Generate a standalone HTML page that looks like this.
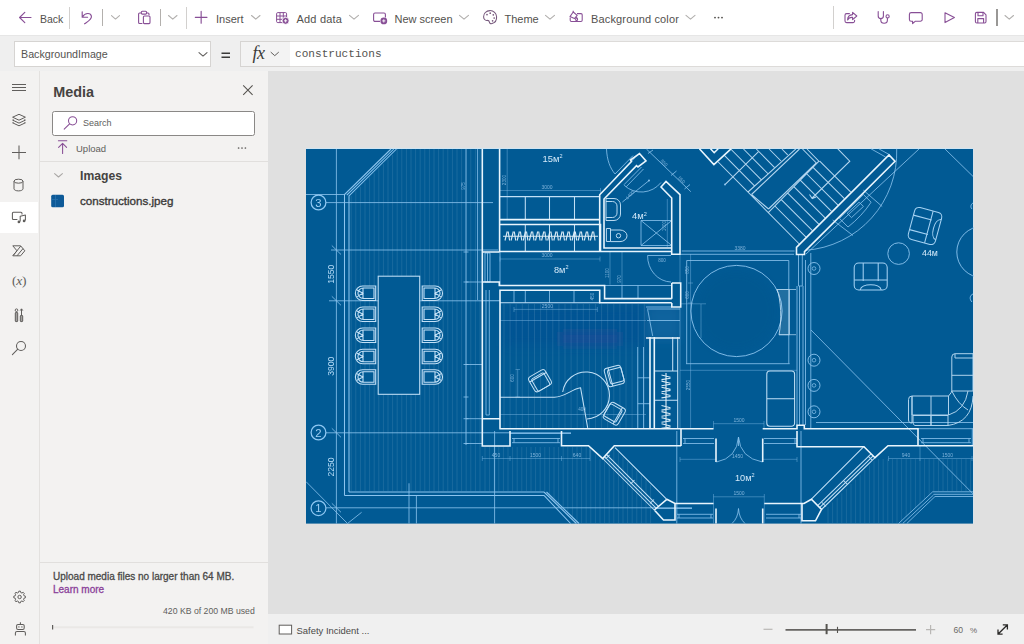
<!DOCTYPE html><html lang="en"><head><meta charset="utf-8"><title>Power Apps Studio</title><style>
*{box-sizing:border-box;margin:0;padding:0}
html,body{width:1024px;height:644px;overflow:hidden;background:#e0e0e0;font-family:"Liberation Sans",sans-serif;color:#3b3a39}
.abs{position:absolute}
#top{left:0;top:0;width:1024px;height:35px;background:#fff}
#fbar{left:0;top:35px;width:1024px;height:36px;background:#efefef;border-top:1px solid #e6e6e6}
#rail{left:0;top:71px;width:40px;height:573px;background:#f3f2f1;border-right:1px solid #e3e1df}
#panel{left:40px;top:71px;width:228px;height:573px;background:#f3f2f1}
#canvas{left:268px;top:71px;width:756px;height:543px;background:#e0e0e0}
#bbar{left:268px;top:614px;width:756px;height:30px;background:#f0f0f0}
.t{position:absolute;white-space:nowrap;line-height:1;color:#53514e}

svg{position:absolute;overflow:visible}
.sep{position:absolute;width:1px}
</style></head><body><div id="top" class="abs"></div><div id="fbar" class="abs"></div><div id="rail" class="abs"></div><div id="panel" class="abs"></div><div id="canvas" class="abs"></div><div id="bbar" class="abs"></div><svg class="abs" style="left:0;top:0" width="1024" height="644" viewBox="0 0 1024 644"><path d="M69.5 7V29M186.5 7V29M833.5 6V29" stroke="#d2d0ce" stroke-width="1"/><path d="M102.5 9V26M160.5 9V26" stroke="#b3b0ad" stroke-width="1"/><path d="M997 9V26" stroke="#55534f" stroke-width="1.2"/><path d="M31 17.5H19.7M24.8 12.3L19.6 17.5L24.8 22.7" fill="none" stroke="#884f96" stroke-width="1.15" stroke-linecap="round" stroke-linejoin="round"/><path d="M82.2 11.8V17.2H87.6M82.6 16.8C85.2 12.6 90.6 12.4 91.4 16.2C92 19.4 88.2 21.4 84.6 23.8" fill="none" stroke="#884f96" stroke-width="1.15" stroke-linecap="round" stroke-linejoin="round"/><path d="M111.5 15.560000000000002 L115.5 19.04 L119.5 15.560000000000002" fill="none" stroke="#b1afad" stroke-width="1.1" stroke-linecap="round" stroke-linejoin="round"/><g fill="none" stroke="#884f96" stroke-width="1.1" stroke-linejoin="round"><path d="M141.3 13H139.6a1 1 0 0 0-1 1V22.5a1 1 0 0 0 1 1H142.4"/><path d="M146.6 13h1.4a1 1 0 0 1 1 1v1.2"/><rect x="141.3" y="11.3" width="5.3" height="2.8" rx="1"/><rect x="143.4" y="16" width="6.6" height="7.6" rx="1"/></g><path d="M168.5 15.482500000000002 L172.75 19.1175 L177 15.482500000000002" fill="none" stroke="#b1afad" stroke-width="1.1" stroke-linecap="round" stroke-linejoin="round"/><path d="M195.3 17.3H207M201.15 11.4V23.2" stroke="#884f96" stroke-width="1.15" stroke-linecap="round"/><path d="M251.5 15.482500000000002 L255.75 19.1175 L260 15.482500000000002" fill="none" stroke="#b1afad" stroke-width="1.1" stroke-linecap="round" stroke-linejoin="round"/><g fill="none" stroke="#884f96" stroke-width="1"><rect x="276.6" y="12.6" width="10" height="10" rx="1.2"/><path d="M280 12.6V22.6M283.3 12.6V22.6M276.6 16V16H286.6M276.6 19.3H286.6"/></g><circle cx="285.6" cy="20.8" r="3.5" fill="#884f96" stroke="#fff" stroke-width="0.8"/><path d="M284 20.8H287.2M285.6 19.2V22.4" stroke="#fff" stroke-width="0.9"/><path d="M349.5 15.405000000000001 L354.0 19.195 L358.5 15.405000000000001" fill="none" stroke="#b1afad" stroke-width="1.1" stroke-linecap="round" stroke-linejoin="round"/><path d="M380 21.4H375a1.4 1.4 0 0 1-1.4-1.4V14.4a1.4 1.4 0 0 1 1.4-1.4H384a1.4 1.4 0 0 1 1.4 1.4V17.5" fill="none" stroke="#884f96" stroke-width="1.1"/><circle cx="383.8" cy="20.9" r="3.4" fill="#884f96"/><path d="M382.2 20.9H385.4M383.8 19.3V22.5" stroke="#fff" stroke-width="0.9"/><path d="M459.5 15.405000000000001 L464.0 19.195 L468.5 15.405000000000001" fill="none" stroke="#b1afad" stroke-width="1.1" stroke-linecap="round" stroke-linejoin="round"/><path d="M490 10.6C486 10.6 483.6 13.6 483.6 16.8C483.6 19 485 20.6 487 20.4C488.6 20.2 489.2 21 489.4 22.2C489.6 23.4 490.6 24 492 23.6C495 22.8 496.8 20 496.6 16.8C496.4 13.2 493.6 10.6 490 10.6Z" fill="none" stroke="#76587c" stroke-width="1.05"/><g fill="#76587c"><circle cx="487" cy="14.6" r="0.85"/><circle cx="490.2" cy="13.2" r="0.85"/><circle cx="493.3" cy="14.8" r="0.85"/><circle cx="494.2" cy="18" r="0.85"/><circle cx="492.6" cy="20.8" r="0.85"/></g><path d="M545.5 15.405000000000001 L550.0 19.195 L554.5 15.405000000000001" fill="none" stroke="#b1afad" stroke-width="1.1" stroke-linecap="round" stroke-linejoin="round"/><g fill="none" stroke="#884f96" stroke-width="1.05" stroke-linejoin="round"><path d="M577 13.6H581a1.2 1.2 0 0 1 1.2 1.2V20.3a1.2 1.2 0 0 1-1.2 1.2H571.4a1.2 1.2 0 0 1-1.2-1.2V17.4"/><path d="M570 16.6L573.2 12L577.2 15.4L574.4 18.6Z"/><path d="M573.2 12V10.8"/><path d="M576.6 17.4c.5.9 1 1.4 1 2a1 1 0 0 1-2 0c0-.6.5-1.1 1-2Z"/></g><path d="M686 15.405000000000001 L690.5 19.195 L695 15.405000000000001" fill="none" stroke="#b1afad" stroke-width="1.1" stroke-linecap="round" stroke-linejoin="round"/><g fill="#55534f"><circle cx="715" cy="17.6" r="0.95"/><circle cx="718.5" cy="17.6" r="0.95"/><circle cx="722" cy="17.6" r="0.95"/></g><g fill="none" stroke="#884f96" stroke-width="1.1" stroke-linejoin="round" stroke-linecap="round"><path d="M849.4 13.6H846.6a1.6 1.6 0 0 0-1.6 1.6V21a1.6 1.6 0 0 0 1.6 1.6H853a1.6 1.6 0 0 0 1.6-1.6V20.2"/><path d="M852.6 12.4L856.8 16L852.6 19.6V17.4C850 17.2 848.4 18.2 847.6 20C847.6 16.8 849.4 14.8 852.6 14.6Z"/></g><g fill="none" stroke="#884f96" stroke-width="1.1" stroke-linecap="round"><path d="M878.2 11.6V16a2.6 2.6 0 0 0 5.2 0V11.6"/><path d="M880.8 18.6V20a3.3 3.3 0 0 0 6.6 0V18"/><circle cx="887.6" cy="16.4" r="1.6"/></g><path d="M911.2 12.6H920.4a1.8 1.8 0 0 1 1.8 1.8V19.4a1.8 1.8 0 0 1-1.8 1.8H915.4L912.6 23.6V21.2H911.2a1.8 1.8 0 0 1-1.8-1.8V14.4a1.8 1.8 0 0 1 1.8-1.8Z" fill="none" stroke="#884f96" stroke-width="1.1" stroke-linejoin="round"/><path d="M945 12.8L954.4 17.6L945 22.6Z" fill="none" stroke="#884f96" stroke-width="1.1" stroke-linejoin="round"/><g fill="none" stroke="#884f96" stroke-width="1.1" stroke-linejoin="round"><path d="M976.8 12.4H983.6L986 14.8V21.6a1.4 1.4 0 0 1-1.4 1.4H976.8a1.4 1.4 0 0 1-1.4-1.4V13.8a1.4 1.4 0 0 1 1.4-1.4Z"/><path d="M978 12.6V15.8H983V12.6M977.8 23V18.6H983.6V23"/></g><path d="M1005 15.482500000000002 L1009.25 19.1175 L1013.5 15.482500000000002" fill="none" stroke="#b1afad" stroke-width="1.1" stroke-linecap="round" stroke-linejoin="round"/><rect x="14.5" y="41.5" width="196" height="25" fill="#fff" stroke="#d6d4d2" stroke-width="1"/><path d="M199 52.559999999999995 L203.0 56.04 L207 52.559999999999995" fill="none" stroke="#605e5c" stroke-width="1.1" stroke-linecap="round" stroke-linejoin="round"/><path d="M221.5 53.2H230M221.5 57.2H230" stroke="#3b3a39" stroke-width="1.5"/><rect x="240.5" y="41.5" width="50" height="25" fill="#f3f3f3" stroke="#d6d4d2" stroke-width="1"/><rect x="290" y="41" width="734" height="26" fill="#fff"/><path d="M290 41.5H1024M290 66.5H1024" stroke="#dddbd9" stroke-width="1"/><path d="M271 52.3375 L274.75 55.6625 L278.5 52.3375" fill="none" stroke="#605e5c" stroke-width="1.0" stroke-linecap="round" stroke-linejoin="round"/><path d="M12 84.5H26M12 87.5H26M12 90.5H26" stroke="#605e5c" stroke-width="1"/><g fill="none" stroke="#605e5c" stroke-width="1" stroke-linejoin="round"><path d="M19 114.3L25.4 117.2L19 120.2L12.6 117.2Z"/><path d="M13.6 119.6L12.6 120.1L19 123.1L25.4 120.1L24.4 119.6"/><path d="M13.6 122.3L12.6 122.8L19 125.8L25.4 122.8L24.4 122.3"/></g><path d="M12 152.4H26M19 145.6V159.2" stroke="#605e5c" stroke-width="1.05"/><g fill="none" stroke="#605e5c" stroke-width="1"><ellipse cx="18.5" cy="181.2" rx="4.5" ry="2"/><path d="M14 181.2V188.8c0 1.2 2 2.1 4.5 2.1s4.5-.9 4.5-2.1V181.2"/></g><rect x="0" y="202" width="38" height="31" fill="#fff"/><g fill="none" stroke="#605e5c" stroke-width="1.05" stroke-linejoin="round"><path d="M17.4 219.4H13.4a1 1 0 0 1-1-1V213.2a1 1 0 0 1 1-1H21a1 1 0 0 1 1 1V214.6"/><path d="M20.2 221.6V216.2L25.4 215V220.6"/></g><circle cx="18.9" cy="221.9" r="1.35" fill="#605e5c"/><circle cx="24.1" cy="220.9" r="1.35" fill="#605e5c"/><g fill="none" stroke="#605e5c" stroke-width="1" stroke-linejoin="round"><path d="M12.8 245.8H20.6L24.8 250.8L20.6 255.8H12.8L17 250.8Z"/><path d="M20.8 246L13.2 255.4M23 248.6L17 255.8"/></g><g fill="#605e5c" fill-opacity=".55" stroke="#605e5c" stroke-width="1"><rect x="15.3" y="312.4" width="2.4" height="9.2" rx="0.6"/><rect x="20.3" y="315.4" width="2.4" height="6.2" rx="0.6"/><circle cx="16.5" cy="310.2" r="1.3" fill="none"/><path d="M21.5 309V315.4M20.2 310.6L21.5 308.8L22.8 310.6" fill="none"/></g><g fill="none" stroke="#605e5c" stroke-width="1.05" stroke-linecap="round"><circle cx="21" cy="346" r="4.5"/><path d="M17.8 349.2L12.4 354.6"/></g><path d="M18.84 591.15 L20.36 591.15 L20.79 592.56 L21.90 593.01 L23.20 592.32 L24.28 593.40 L23.59 594.70 L24.04 595.81 L25.45 596.24 L25.45 597.76 L24.04 598.19 L23.59 599.30 L24.28 600.60 L23.20 601.68 L21.90 600.99 L20.79 601.44 L20.36 602.85 L18.84 602.85 L18.41 601.44 L17.30 600.99 L16.00 601.68 L14.92 600.60 L15.61 599.30 L15.16 598.19 L13.75 597.76 L13.75 596.24 L15.16 595.81 L15.61 594.70 L14.92 593.40 L16.00 592.32 L17.30 593.01 L18.41 592.56Z" fill="none" stroke="#605e5c" stroke-width="1" stroke-linejoin="round"/><circle cx="19.6" cy="597" r="1.7" fill="none" stroke="#605e5c" stroke-width="1"/><g fill="none" stroke="#605e5c" stroke-width="1.05" stroke-linejoin="round"><path d="M20.4 622.2V624.4"/><rect x="16.6" y="624.4" width="7.6" height="5" rx="1.4"/><path d="M15.4 635.4V633a1.6 1.6 0 0 1 1.6-1.6H23.8a1.6 1.6 0 0 1 1.6 1.6V635.4"/></g><circle cx="18.9" cy="626.9" r="0.7" fill="#605e5c"/><circle cx="21.9" cy="626.9" r="0.7" fill="#605e5c"/><path d="M243.2 85.4L252.6 94.8M252.6 85.4L243.2 94.8" stroke="#55534f" stroke-width="1.05"/><rect x="52.5" y="111.5" width="202" height="24" rx="2" fill="#fff" stroke="#8a8886" stroke-width="1"/><g fill="none" stroke="#884f96" stroke-width="1.05" stroke-linecap="round"><circle cx="72.6" cy="120.8" r="4.1"/><path d="M69.6 123.8L64.2 129.2"/></g><path d="M58.4 140.8H66.8M62.6 153.4V143.6M58.6 147.4L62.6 143.4L66.6 147.4" fill="none" stroke="#884f96" stroke-width="1.05" stroke-linecap="round" stroke-linejoin="round"/><g fill="#605e5c"><circle cx="238.6" cy="148" r="0.85"/><circle cx="242" cy="148" r="0.85"/><circle cx="245.4" cy="148" r="0.85"/></g><path d="M40 161.5H268" stroke="#e1dfdd" stroke-width="1"/><path d="M54.6 173.591 L58.5 177.00900000000001 L62.4 173.591" fill="none" stroke="#a9a7a5" stroke-width="1.05" stroke-linecap="round" stroke-linejoin="round"/><rect x="51.2" y="194.8" width="12.8" height="12.4" rx="1.5" fill="#0d5a98"/><path d="M55.5 195V207M51.5 199.5H58" stroke="#2a72ad" stroke-width="0.8"/><path d="M40 562.5H268" stroke="#e1dfdd" stroke-width="1"/><path d="M53 627.2H253.5" stroke="#eae8e6" stroke-width="2"/><path d="M52.6 625V629.4" stroke="#605e5c" stroke-width="1.2"/><rect x="279.2" y="625.2" width="12.4" height="8.8" fill="#fff" stroke="#605e5c" stroke-width="1"/><path d="M763.5 629.3H772.5" stroke="#b9b7b5" stroke-width="1.2"/><path d="M785.5 629.8H916" stroke="#666462" stroke-width="1.8"/><path d="M826.6 624V634.2" stroke="#55534f" stroke-width="2"/><path d="M837.5 626.8V633" stroke="#55534f" stroke-width="1.1"/><path d="M926 629.6H935.2M930.6 625V634.2" stroke="#b9b7b5" stroke-width="1.2"/><path d="M998.4 633.8L1007 625.2M998 629.6V634.2H1002.6M1002.8 624.8H1007.4V629.4" fill="none" stroke="#2b2a29" stroke-width="1.3"/></svg><div class="t" style="left:40px;top:14.11px;font-size:10.5px;">Back</div><div class="t" style="left:216px;top:13.69px;font-size:11px;">Insert</div><div class="t" style="left:296.5px;top:13.69px;font-size:11px;letter-spacing:.2px">Add data</div><div class="t" style="left:394.5px;top:13.69px;font-size:11px;">New screen</div><div class="t" style="left:504.5px;top:13.69px;font-size:11px;">Theme</div><div class="t" style="left:591px;top:13.69px;font-size:11px;letter-spacing:.15px">Background color</div><div class="t" style="left:21px;top:48.94px;font-size:10.7px;color:#555350">BackgroundImage</div><div class="t" style="left:252.5px;top:44px;font-family:'Liberation Serif',serif;font-style:italic;font-size:18px;color:#3b3a39;letter-spacing:-0.6px">fx</div><div class="t" style="left:295px;top:48.80px;font-size:11.1px;font-family:'Liberation Mono',monospace;color:#555350">constructions</div><div class="t" style="left:12px;top:274.6px;font-family:'Liberation Serif',serif;font-size:13.5px;color:#605e5c;letter-spacing:-0.2px;margin-top:-0.5px">(<i>x</i>)</div><div class="t" style="left:53.3px;top:84.51px;font-size:14.4px;font-weight:bold;color:#454341">Media</div><div class="t" style="left:83px;top:118.68px;font-size:9px;color:#605e5c">Search</div><div class="t" style="left:76px;top:144.26px;font-size:9.5px;color:#605e5c">Upload</div><div class="t" style="left:80px;top:169.97px;font-size:12.2px;font-weight:bold;color:#454341">Images</div><div class="t" style="left:80px;top:194.88px;font-size:11.6px;color:#3b3a39;-webkit-text-stroke:0.35px #3b3a39">constructions.jpeg</div><div class="t" style="left:53px;top:571.53px;font-size:10px;color:#4a4948;-webkit-text-stroke:0.3px #4a4948">Upload media files no larger than 64 MB.</div><div class="t" style="left:53px;top:584.53px;font-size:10px;color:#8a3f99;-webkit-text-stroke:0.3px #8a3f99">Learn more</div><div class="t" style="left:163px;top:606.64px;font-size:8.7px;color:#605e5c">420 KB of 200 MB used</div><div class="t" style="left:296.5px;top:625.50px;font-size:9.45px;color:#4a4948">Safety Incident ...</div><div class="t" style="left:953.5px;top:626.42px;font-size:8.6px;color:#6b6967">60</div><div class="t" style="left:970px;top:626.93px;font-size:8px;color:#6b6967">%</div><svg class="abs" style="left:306px;top:148px;overflow:hidden;filter:blur(.5px)" width="668" height="376" viewBox="306 148 668 376"><rect x="306" y="149" width="667" height="374.6" fill="#015a94"/><path d="M306 148.4H973.4" stroke="#cfe6f6" stroke-width="1.2" opacity=".9"/><path d="M973.4 149V523.6" stroke="#cfe6f6" stroke-width="0.8" opacity=".7"/><defs><filter id="bl" x="-20%" y="-20%" width="140%" height="140%"><feGaussianBlur stdDeviation="5"/></filter></defs><g filter="url(#bl)"><rect x="504" y="306" width="140" height="40" fill="#0a4f93" opacity=".55"/><rect x="560" y="332" width="60" height="14" fill="#4a3aa0" opacity=".18"/><rect x="648" y="306" width="32" height="34" fill="#3f86c4" opacity=".2"/><ellipse cx="736" cy="311" rx="40" ry="40" fill="#04528c" opacity=".35"/></g><path d="M351.2 195.8V491M355.8 191.3V491M360.4 186.7V491M365.0 182.2V491M369.6 177.6V491M374.2 173.1V491M378.8 168.5V491M383.4 164.0V491M388.0 159.4V491M392.6 154.9V491M397.2 149.0V491M401.8 149.0V491M406.4 149.0V491M411.0 149.0V491M415.6 149.0V491M420.2 149.0V491M424.8 149.0V491M429.4 149.0V491M434.0 149.0V491M438.6 149.0V491M443.2 149.0V491M447.8 149.0V491M452.4 149.0V491M457.0 149.0V491M461.6 149.0V491M466.2 149.0V491M470.8 149.0V491M475.4 149.0V491M480.0 149.0V491M485.0 447.0V491.0M489.6 447.0V491.0M494.2 447.0V491.0M498.8 447.0V491.0M503.4 447.0V491.0M508.0 447.0V491.0M512.6 447.0V491.0M517.2 447.0V491.0M521.8 447.0V491.0M526.4 447.0V491.0M531.0 447.0V491.0M535.6 447.0V491.0M540.2 447.0V491.0M544.8 447.0V491.0M549.4 447.0V497.4M554.0 447.0V502.0M558.6 447.0V506.6M563.2 447.0V511.2M567.8 447.0V515.8M572.4 447.0V520.4M577.0 447.0V523.0M581.6 447.0V523.0M586.2 447.0V523.0M590.8 449.8V523.0M595.4 454.4V523.0M600.0 459.0V523.0M604.6 457.2V523.0M609.2 452.2V523.0M613.8 447.1V523.0M618.4 452.4V523.0M623.0 457.0V523.0M627.6 461.6V523.0M632.2 466.2V523.0M636.8 470.8V523.0M641.4 475.4V523.0M646.0 480.0V523.0M650.6 484.6V523.0M828.0 507.0V523.0M832.6 502.4V523.0M837.2 497.8V523.0M841.8 493.2V523.0M846.4 488.6V523.0M851.0 484.0V523.0M855.6 479.4V523.0M860.2 474.8V523.0M864.8 470.2V523.0M869.4 465.6V523.0M874.0 461.0V523.0M878.6 459.0V523.0M883.2 459.0V523.0M887.8 459.0V523.0M892.4 459.0V523.0M897.0 459.0V523.0M901.6 459.0V521.4M906.2 459.0V517.0M910.8 459.0V512.5M915.4 459.0V508.1M920.0 459.0V503.6M924.6 459.0V499.1M929.2 459.0V494.7M933.8 459.0V491.0M938.4 459.0V491.0M943.0 459.0V491.0M947.6 459.0V491.0M952.2 459.0V491.0M956.8 459.0V491.0M961.4 459.0V491.0M966.0 459.0V491.0M970.6 459.0V491.0M504.0 304V428M510.1 304V428M516.2 304V428M522.3 304V428M528.4 304V428M534.5 304V428M540.6 304V428M546.7 304V428M552.8 304V428M558.9 304V428M565.0 304V428M571.1 304V428M577.2 304V428M583.3 304V428M589.4 304V428M595.5 304V428M601.6 304V428M607.7 304V428M613.8 304V428M619.9 304V428M626.0 304V428M632.1 304V428M638.2 304V428M644.3 304V428" stroke="#fff" stroke-width="0.7" opacity=".15" fill="none"/><path d="M718.2 162L799.3 244M724.1 155.2L754.5 185.9M730.7 149.0L761.1 179.7M743.5 149.0L767.8 173.5M756.3 149.0L774.4 167.3M769.1 149.0L781.0 161.0M781.9 149.0L787.7 154.8M748 192L795.9 148.8M751.5 194.5L799.5 149M768.5 212.4L818.9 161.2L807 149M768.5 209L816.3 163L802.5 149M751.5 194.5L768.5 209M725 184.6L758.3 151.8M774.9 206.0L806.0 237.1M781.3 199.6L812.4 230.7M787.7 193.2L818.8 224.2M794.1 186.8L825.1 217.8M800.5 180.4L831.5 211.4M806.9 174.0L838.0 205.1M813.3 167.6L844.4 198.7M819.7 161.2L850.8 192.2M837.8 148.8L849.8 161.2L812.2 198M809.5 194.5L812.2 198.5L816 197" fill="none" stroke="#c2e0f6" stroke-width="1.05" opacity=".92"/><path d="M336.4 149V523.5M306 194.5H345M326 202.6H493M326 432.8H571M326 507.8H692M331 250H498M329 300.8H500M331.8 245.5L341 254.5M331.8 296.3L341 305.3M331.8 428.3L341 437.3M331.8 503.3L341 512.3M466 149V445M463.5 252H468.5M463.5 282H468.5M463.5 364.5H468.5M463.5 397H468.5M463.5 418.7H468.5M463.5 443.5H468.5M466 282H482M466 364.5H482M466 418.7H482M466 443.5H482M306 481.6L347.5 523.5M347.5 523.5L361.6 512.3M409 483.3V523.5M416.4 495.7V523.5M477.6 149V300M485 253H490V282H485ZM487.5 253V282M494.6 431V523.5M604.6 285.5H646M622 285.5V298M638 285.5V298M646 285.5H671.8M500 252V285.5M525.3 290.3V302.8M549.5 290.3V302.8M574 290.3V302.8M514 290.3V302.8M606.5 149C607 160 610 168 615 174M615 174L633 155.6M617 176L635 157.6M624 184.7L641.5 167M626.2 186.8L643.5 169M624.2 185.3A25.1 25.1 0 0 0 661 182.5M622.4 202L649 180.6M646.4 149L690.8 191.7M648 153.5L653 150M671 175.5L676.5 171M684.5 189L690 184.5M641 220.5H671.7M641 220.5V245.5M641 245.5H671.7M641 220.5L671.7 245.5M671.7 220.5L641 245.5M647.6 255.5H671M647.6 255.5A24 26 0 0 0 671 282M681.8 251H794.6M681 254.3H794M686.7 260.5H788.8M686.7 260.5V363.7M788.8 260.5V363.7M686 363.7H789.7M646 307H672M647 309H680M647 320.5H680M647.7 309.7L652.7 336M798.5 254.5V286M802.3 254.5V286M798.5 286H802.3M797 286V425M799.5 286V425M803 286V425M805.5 260V425M810.8 253V428M637.7 347V428M643.5 347V428M637.7 377.8H650M637.7 403.7H650M486 290V415M489.3 290V415M486 415H489.3M512 438.5H560M512 442.7H560M514 438.5V442.7M558 438.5V442.7M510 433.5H571M683 438.5H714M683 443.5H714M685 438.5V443.5M764 438.5H797M764 443.5H797M795 438.5V443.5M676.8 431V523.5M801 431V523.5M677 514.3H713M677 518H713M679 514.3V518M711 514.3V518M766 514.3H801M766 518H801M799 514.3V518M656 508.5H692M738.5 437Q737 458 716.5 462M738.5 437Q740 458 762.5 462M738.5 437V446M738.5 508.5Q738 518 732 523.5M738.5 508.5Q739 518 745 523.5M921 438.5H971M921 442.7H971M923 438.5V442.7M969 438.5V442.7M816 422.5H973M811 330L973.5 494.3M932.7 491.8H973M933.5 494.3H973M935 496.5H973M932.7 491.8L898.5 523.5M933.5 495L902.7 523.5M935 496.5L906.8 523.5M918 428.7H973M972.3 428.7V446M896.7 148.8A98.3 98.3 0 0 1 805.4 250.3M919 149L806 254M945 149L973 176.4M871 148.8L885.6 157M878.8 148.8L889.9 154.9M847.2 213.3L859.1 202.2L863.4 206.5L851.5 217.6ZM839.5 218.4L863.4 194.5L871.1 202.2Q862 216 848 227ZM863.4 190.2L882.2 206.5M832.7 220L853 235.5" fill="none" stroke="#8cc4ee" stroke-width="0.9" opacity=".9"/><path d="M507.2 149V219M499.6 190.5H600.5M499.6 188V193M600.5 188V193M500 259H600M500 256.5V261.5M600 256.5V261.5M610 252V284.7M622 252V285.5M514 309.4H597.3M514 307V312M597.3 307V312M482 300.5H500M500 320.5H646M667.3 199V247M690.6 254V427.8M688 283H693M688 303H693M680 254V283M680 307V428M680 370.3H797M681 303.8H706M701 304V338M500 414.5H646M517.7 369.5V397M515.5 369.5H520M515.5 397H520M482.3 458.5H590M482.3 456V461M510 456V461M561.5 456V461M590 447V461M680 459.3H716M763 459.3H797M680 457V462M797 457V462M713.5 496.8H764.3M713.5 494V523.5M764.3 494V523.5M713.5 423.7H764M713.5 421V428.7M764 421V428.7M888.5 458.5H973M888.5 456V461M920 446V461M972 456V461" fill="none" stroke="#8cc4ee" stroke-width="0.8" opacity=".5"/><circle cx="725" cy="184.6" r="1" fill="#8cc4ee"/><circle cx="649" cy="180.6" r="1" fill="#8cc4ee"/><circle cx="814" cy="268.5" r="6" fill="none" stroke="#8cc4ee" stroke-width=".9"/><circle cx="814" cy="268.5" r="1.8" fill="none" stroke="#8cc4ee" stroke-width=".7"/><circle cx="814" cy="360.2" r="6" fill="none" stroke="#8cc4ee" stroke-width=".9"/><circle cx="814" cy="360.2" r="1.8" fill="none" stroke="#8cc4ee" stroke-width=".7"/><circle cx="814" cy="385.4" r="6" fill="none" stroke="#8cc4ee" stroke-width=".9"/><circle cx="814" cy="385.4" r="1.8" fill="none" stroke="#8cc4ee" stroke-width=".7"/><circle cx="814" cy="411.8" r="6" fill="none" stroke="#8cc4ee" stroke-width=".9"/><circle cx="814" cy="411.8" r="1.8" fill="none" stroke="#8cc4ee" stroke-width=".7"/><circle cx="736.5" cy="311" r="45.6" fill="none" stroke="#8cc4ee" stroke-width=".9"/><circle cx="898.6" cy="253.6" r="10.8" fill="none" stroke="#8cc4ee" stroke-width=".9"/><circle cx="982.5" cy="252" r="25.7" fill="none" stroke="#8cc4ee" stroke-width=".9"/><path d="M973 203c-2 1-3 4-1 6M973 294c-3 1-4 5-1 8" fill="none" stroke="#8cc4ee" stroke-width=".9"/><path d="M391 149L344.5 194.5V495.4M393.8 149L346.8 195.2M396.5 149L349 196V492M349 492H544M344.5 495.4H544M544 492L576.4 523.5M544 495.4L570.6 523.5M546.5 492L579 523.5" fill="none" stroke="#8cc4ee" stroke-width="1.05"/><path d="M499.6 196.6H600M525.3 196.6V219.6M549.5 196.6V219.6M574.5 196.6V219.6M525.3 224.5V251.3M549.5 224.5V251.3M574.5 224.5V251.3M500 302.8H600M500 397.3H554.3C565 397 572 389 580.6 387.8L587.7 427.8M562.7 392A23.5 23.5 0 1 1 587 418.9M615 447.7L666.8 499.3M602.7 458.5L654.3 510M604.5 456.7L656.1 508.2M606.6 454.6L658.2 506.1M864 446.3L811.4 499.2M875 457.7L821.5 509.5M873.2 455.9L819.6 507.6M871.1 453.8L817.6 505.6M605.5 459L609.5 455M630.5 484L634.5 480M650 503.5L654 499.5M872 460L868 456M847.5 484.5L843.5 480.5M826 506.5L822 502.5M769.8 371H791.6a3 3 0 0 1 3 3V423.2a3 3 0 0 1-3 3H769.8a3 3 0 0 1-3-3V374a3 3 0 0 1 3-3ZM766.8 398.7H794.6M677.7 337V428.7M654.3 371H677.7M654.3 400.3H677.7M672.7 337V371" fill="none" stroke="#c2e0f6" stroke-width="1.05"/><path d="M482.3 149V446H510V431M482.3 418.7H499.3M499.6 149V252M482.3 252H499.6M499.6 219.6H600.5M499.2 224.5H600.5V251.3M499.2 251.5H671.7M599.7 251.3V194.7L631.5 161.5L630.5 160L639.5 153.5L646 161L638 167L636.5 165.6L604 199V248H671.7M661 187L666 181.5L680 194.7V254.3H671.7V198ZM699.4 148.8L713.9 164.6L731 148.8M710.5 148.8L714.2 152.7L718.2 148.8M482.3 282H499.3V285.5H604.6V298.6H671.8M500 428.7V290.3H599.7V302.8H671.8M671.8 283H680.7V307H671.8V303M671.8 283V298.8M796.5 247.4L889 154.9L895 161.2L804.5 251.7V254.5H796.5ZM499.3 428.7H681V446M646 445.7H681M561.5 431V445.7H588.5L602.7 458.5L614.3 445.7H646M650 337V428.7M654.3 337V428.7M646 338H680M716 438.5V462M762.7 438.5V462M762.7 428.7H797V425.3H804.3V428.7H918V446M797 431V446.7H864L875 457.7L888 445.7H973M681.8 428.7H713.5M666.8 499.3L675 503.5H713.5M654.3 510L663.5 520H675V503.5M654.3 510L666.8 499.3M716 508.5V523.5M762.7 508.5V523.5M764.3 503.5H804L811.4 499.2L821.5 509.5L815.5 520.8H802V503.5" fill="none" stroke="#e9f5fd" stroke-width="1.6" stroke-linejoin="miter"/><path d="M503 236.2H598M505.0 240.5L507.2 231.5M508.2 231.5L509.6 240.5M511.1 240.5L513.3 231.5M514.3 231.5L515.7 240.5M517.2 240.5L519.4 231.5M520.4 231.5L521.8 240.5M523.3 240.5L525.5 231.5M526.5 231.5L527.9 240.5M529.4 240.5L531.6 231.5M532.6 231.5L534.0 240.5M535.5 240.5L537.7 231.5M538.7 231.5L540.1 240.5M541.6 240.5L543.8 231.5M544.8 231.5L546.2 240.5M547.7 240.5L549.9 231.5M550.9 231.5L552.3 240.5M553.8 240.5L556.0 231.5M557.0 231.5L558.4 240.5M559.9 240.5L562.1 231.5M563.1 231.5L564.5 240.5M566.0 240.5L568.2 231.5M569.2 231.5L570.6 240.5M572.1 240.5L574.3 231.5M575.3 231.5L576.7 240.5M578.2 240.5L580.4 231.5M581.4 231.5L582.8 240.5M584.3 240.5L586.5 231.5M587.5 231.5L588.9 240.5M590.4 240.5L592.6 231.5M593.6 231.5L595.0 240.5" fill="none" stroke="#e9f5fd" stroke-width="1.15" opacity=".92"/><path d="M666 373V427M661.5 375.0L670.5 377.2M670.5 378.2L661.5 379.6M661.5 381.1L670.5 383.3M670.5 384.3L661.5 385.7M661.5 387.2L670.5 389.4M670.5 390.4L661.5 391.8M661.5 393.3L670.5 395.5M670.5 396.5L661.5 397.9M661.5 405.5L670.5 407.7M670.5 408.7L661.5 410.1M661.5 411.6L670.5 413.8M670.5 414.8L661.5 416.2M661.5 417.7L670.5 419.9M670.5 420.9L661.5 422.3M661.5 423.8L670.5 426.0M670.5 427.0L661.5 428.4" fill="none" stroke="#e9f5fd" stroke-width="1.15" opacity=".92"/><path d="M777 289.5H789.3V334.7H779C782 320 781 300 777 289.5Z" fill="#fff" fill-opacity=".13" stroke="#cfe6f6" stroke-width=".8"/><path d="M779 289.5H796M779 334.7H796" stroke="#a4cdea" stroke-width=".8"/><rect x="378.2" y="276.2" width="41.5" height="118.1" fill="#015a94" stroke="#c2e0f6" stroke-width="1.05"/><path d="M375.7 286H362.6a7.25 7.25 0 0 0 0 14.5H375.7Z M374 288H363.2a5.2 5.2 0 0 0 0 10.5H374Z M363 288V298.5M357 290L363 293.25L357 296.5M422.2 286H435.3a7.25 7.25 0 0 1 0 14.5H422.2Z M424 288H434.8a5.2 5.2 0 0 1 0 10.5H424Z M435 288V298.5M441 290L435 293.25L441 296.5M375.7 307H362.6a7.25 7.25 0 0 0 0 14.5H375.7Z M374 309H363.2a5.2 5.2 0 0 0 0 10.5H374Z M363 309V319.5M357 311L363 314.25L357 317.5M422.2 307H435.3a7.25 7.25 0 0 1 0 14.5H422.2Z M424 309H434.8a5.2 5.2 0 0 1 0 10.5H424Z M435 309V319.5M441 311L435 314.25L441 317.5M375.7 328H362.6a7.25 7.25 0 0 0 0 14.5H375.7Z M374 330H363.2a5.2 5.2 0 0 0 0 10.5H374Z M363 330V340.5M357 332L363 335.25L357 338.5M422.2 328H435.3a7.25 7.25 0 0 1 0 14.5H422.2Z M424 330H434.8a5.2 5.2 0 0 1 0 10.5H424Z M435 330V340.5M441 332L435 335.25L441 338.5M375.7 349.3H362.6a7.25 7.25 0 0 0 0 14.5H375.7Z M374 351.3H363.2a5.2 5.2 0 0 0 0 10.5H374Z M363 351.3V361.8M357 353.3L363 356.55L357 359.8M422.2 349.3H435.3a7.25 7.25 0 0 1 0 14.5H422.2Z M424 351.3H434.8a5.2 5.2 0 0 1 0 10.5H424Z M435 351.3V361.8M441 353.3L435 356.55L441 359.8M375.7 369.8H362.6a7.25 7.25 0 0 0 0 14.5H375.7Z M374 371.8H363.2a5.2 5.2 0 0 0 0 10.5H374Z M363 371.8V382.3M357 373.8L363 377.05L357 380.3M422.2 369.8H435.3a7.25 7.25 0 0 1 0 14.5H422.2Z M424 371.8H434.8a5.2 5.2 0 0 1 0 10.5H424Z M435 371.8V382.3M441 373.8L435 377.05L441 380.3" fill="#015a94" stroke="#c2e0f6" stroke-width="1.1"/><g transform="translate(540 380.7) rotate(-30)" fill="none" stroke="#c2e0f6" stroke-width="1"><rect x="-9.5" y="-8.5" width="19" height="17" rx="3"/><rect x="-7" y="-5.5" width="14" height="14" rx="1.5"/><path d="M-9.5 -4H9.5"/></g><g transform="translate(614.3 376) rotate(-105)" fill="none" stroke="#c2e0f6" stroke-width="1"><rect x="-9.5" y="-8.5" width="19" height="17" rx="3"/><rect x="-7" y="-5.5" width="14" height="14" rx="1.5"/><path d="M-9.5 -4H9.5"/></g><g transform="translate(614.3 413.7) rotate(120)" fill="none" stroke="#c2e0f6" stroke-width="1"><rect x="-9.5" y="-8.5" width="19" height="17" rx="3"/><rect x="-7" y="-5.5" width="14" height="14" rx="1.5"/><path d="M-9.5 -4H9.5"/></g><g transform="translate(925 226) rotate(-75)" fill="none" stroke="#a5d2f3" stroke-width="1.05"><rect x="-16.5" y="-14.0" width="33" height="28" rx="4.5"/><path d="M-7.5 -14.0V5.0M7.5 -14.0V5.0M-16.5 4.0H16.5M-10.5 14.0C-9.5 7.0 9.5 7.0 10.5 14.0"/></g><g transform="translate(870.7 276.5) rotate(0)" fill="none" stroke="#a5d2f3" stroke-width="1.05"><rect x="-16.5" y="-13.5" width="33" height="27" rx="4.5"/><path d="M-7.5 -13.5V4.5M7.5 -13.5V4.5M-16.5 3.5H16.5M-10.5 13.5C-9.5 6.5 9.5 6.5 10.5 13.5"/></g><g fill="none" stroke="#c2e0f6" stroke-width="1" opacity=".9"><path d="M912 396H948.5V415H912ZM931 396V415M908.5 399.5a3.5 3.5 0 0 1 3.5-3.5V423a3 3 0 0 1-3.5-3ZM913 415.5H931V425.5H915a3 3 0 0 1-2-3ZM931 415.5H948V425.5H931Z"/><path d="M951.8 357a3.3 3.3 0 0 1 3.3-3.3H973V391H951.8ZM951.8 375.3H973M955 353.7V358H973"/><path d="M948.5 396Q952 392 951.8 391M948 425.5Q972 422 973 396M948.5 415Q965 410 968 391M951.8 391Q958 404 968 410"/></g><g fill="none" stroke="#c2e0f6" stroke-width=".95"><path d="M606 198.5H614a6.5 6.5 0 0 1 6.5 6.5V214a6.5 6.5 0 0 1-6.5 6.5H606Z"/><path d="M606 201.5H612.5a4.5 4.5 0 0 1 4.5 4.5V213a4.5 4.5 0 0 1-4.5 4.5H606"/><path d="M606.4 228.5H610.5V241.5H606.4ZM610.5 230H620a7 5.8 0 0 1 0 11.6H610.5"/><circle cx="618.5" cy="235.7" r="2.2"/></g><g font-family="'Liberation Sans',sans-serif"><text x="318.5" y="206.7" font-size="11.3" text-anchor="middle" fill="#9fd0f5" opacity="1">3</text><text x="318.5" y="436.6" font-size="11.3" text-anchor="middle" fill="#9fd0f5" opacity="1">2</text><text x="318.5" y="512.3" font-size="11.3" text-anchor="middle" fill="#9fd0f5" opacity="1">1</text><text x="334" y="274.3" font-size="8.6" text-anchor="middle" fill="#b4dbf7" opacity="1" transform="rotate(-90 334 274.3)">1550</text><text x="334" y="366.3" font-size="8.6" text-anchor="middle" fill="#b4dbf7" opacity="1" transform="rotate(-90 334 366.3)">3900</text><text x="334" y="467" font-size="8.6" text-anchor="middle" fill="#b4dbf7" opacity="1" transform="rotate(-90 334 467)">2250</text><text x="542.5" y="161.5" font-size="9.4" text-anchor="start" fill="#d5eafa" opacity="1">15м<tspan dy="-3.5" font-size="5.5">2</tspan></text><text x="554" y="272.7" font-size="9.2" text-anchor="start" fill="#d5eafa" opacity="1">8м<tspan dy="-3.5" font-size="5.5">2</tspan></text><text x="632" y="219.2" font-size="9.4" text-anchor="start" fill="#d5eafa" opacity="1">4м<tspan dy="-3.5" font-size="5.5">2</tspan></text><text x="735" y="480.5" font-size="9.2" text-anchor="start" fill="#d5eafa" opacity="1">10м<tspan dy="-3.5" font-size="5.5">2</tspan></text><text x="922" y="256.3" font-size="8.8" text-anchor="start" fill="#d5eafa" opacity="1">44м</text><text x="547" y="188.6" font-size="5" text-anchor="middle" fill="#7fb3db" opacity="1">3000</text><text x="547" y="257.4" font-size="5" text-anchor="middle" fill="#7fb3db" opacity="1">3000</text><text x="547.4" y="307.8" font-size="5" text-anchor="middle" fill="#7fb3db" opacity="1">2500</text><text x="506" y="180" font-size="4.6" text-anchor="middle" fill="#7fb3db" opacity="1" transform="rotate(-90 506 180)">2300</text><text x="464.5" y="186" font-size="4.6" text-anchor="middle" fill="#7fb3db" opacity="1" transform="rotate(-90 464.5 186)">975</text><text x="609" y="273" font-size="4.6" text-anchor="middle" fill="#7fb3db" opacity="1" transform="rotate(-90 609 273)">1100</text><text x="621" y="279" font-size="4.6" text-anchor="middle" fill="#7fb3db" opacity="1" transform="rotate(-90 621 279)">970</text><text x="594" y="296.5" font-size="4.6" text-anchor="middle" fill="#7fb3db" opacity="1" transform="rotate(-90 594 296.5)">450</text><text x="740" y="249.6" font-size="5" text-anchor="middle" fill="#7fb3db" opacity="1">3380</text><text x="662" y="261.6" font-size="4.6" text-anchor="middle" fill="#7fb3db" opacity="1">800</text><text x="689" y="270" font-size="4.6" text-anchor="middle" fill="#7fb3db" opacity="1" transform="rotate(-90 689 270)">850</text><text x="689" y="295" font-size="4.6" text-anchor="middle" fill="#7fb3db" opacity="1" transform="rotate(-90 689 295)">600</text><text x="689.5" y="385" font-size="4.6" text-anchor="middle" fill="#7fb3db" opacity="1" transform="rotate(-90 689.5 385)">2550</text><text x="666" y="226" font-size="4.6" text-anchor="middle" fill="#7fb3db" opacity="1" transform="rotate(-90 666 226)">1000</text><text x="631" y="196" font-size="4.6" text-anchor="middle" fill="#7fb3db" opacity="1" transform="rotate(-46 631 196)">1400</text><text x="663" y="164" font-size="4.6" text-anchor="middle" fill="#7fb3db" opacity="1" transform="rotate(44 663 164)">850</text><text x="680.5" y="181" font-size="4.6" text-anchor="middle" fill="#7fb3db" opacity="1" transform="rotate(44 680.5 181)">550</text><text x="514" y="378" font-size="4.6" text-anchor="middle" fill="#7fb3db" opacity="1" transform="rotate(-90 514 378)">600</text><text x="582" y="411" font-size="4.6" text-anchor="middle" fill="#7fb3db" opacity="1">400</text><text x="739" y="421.8" font-size="5" text-anchor="middle" fill="#7fb3db" opacity="1">1500</text><text x="739" y="495" font-size="5" text-anchor="middle" fill="#7fb3db" opacity="1">1500</text><text x="737.5" y="458" font-size="5" text-anchor="middle" fill="#7fb3db" opacity="1">1450</text><text x="496" y="456.6" font-size="5" text-anchor="middle" fill="#7fb3db" opacity="1">450</text><text x="535.5" y="456.6" font-size="5" text-anchor="middle" fill="#7fb3db" opacity="1">1500</text><text x="577" y="456.6" font-size="5" text-anchor="middle" fill="#7fb3db" opacity="1">640</text><text x="906" y="456.6" font-size="5" text-anchor="middle" fill="#7fb3db" opacity="1">940</text><text x="947.5" y="456.6" font-size="5" text-anchor="middle" fill="#7fb3db" opacity="1">1500</text></g><circle cx="318.5" cy="202.5" r="7.4" fill="none" stroke="#8fc8f3" stroke-width="1.25"/><circle cx="318.5" cy="432.5" r="7.4" fill="none" stroke="#8fc8f3" stroke-width="1.25"/><circle cx="318.5" cy="508.2" r="7.4" fill="none" stroke="#8fc8f3" stroke-width="1.25"/></svg></body></html>
